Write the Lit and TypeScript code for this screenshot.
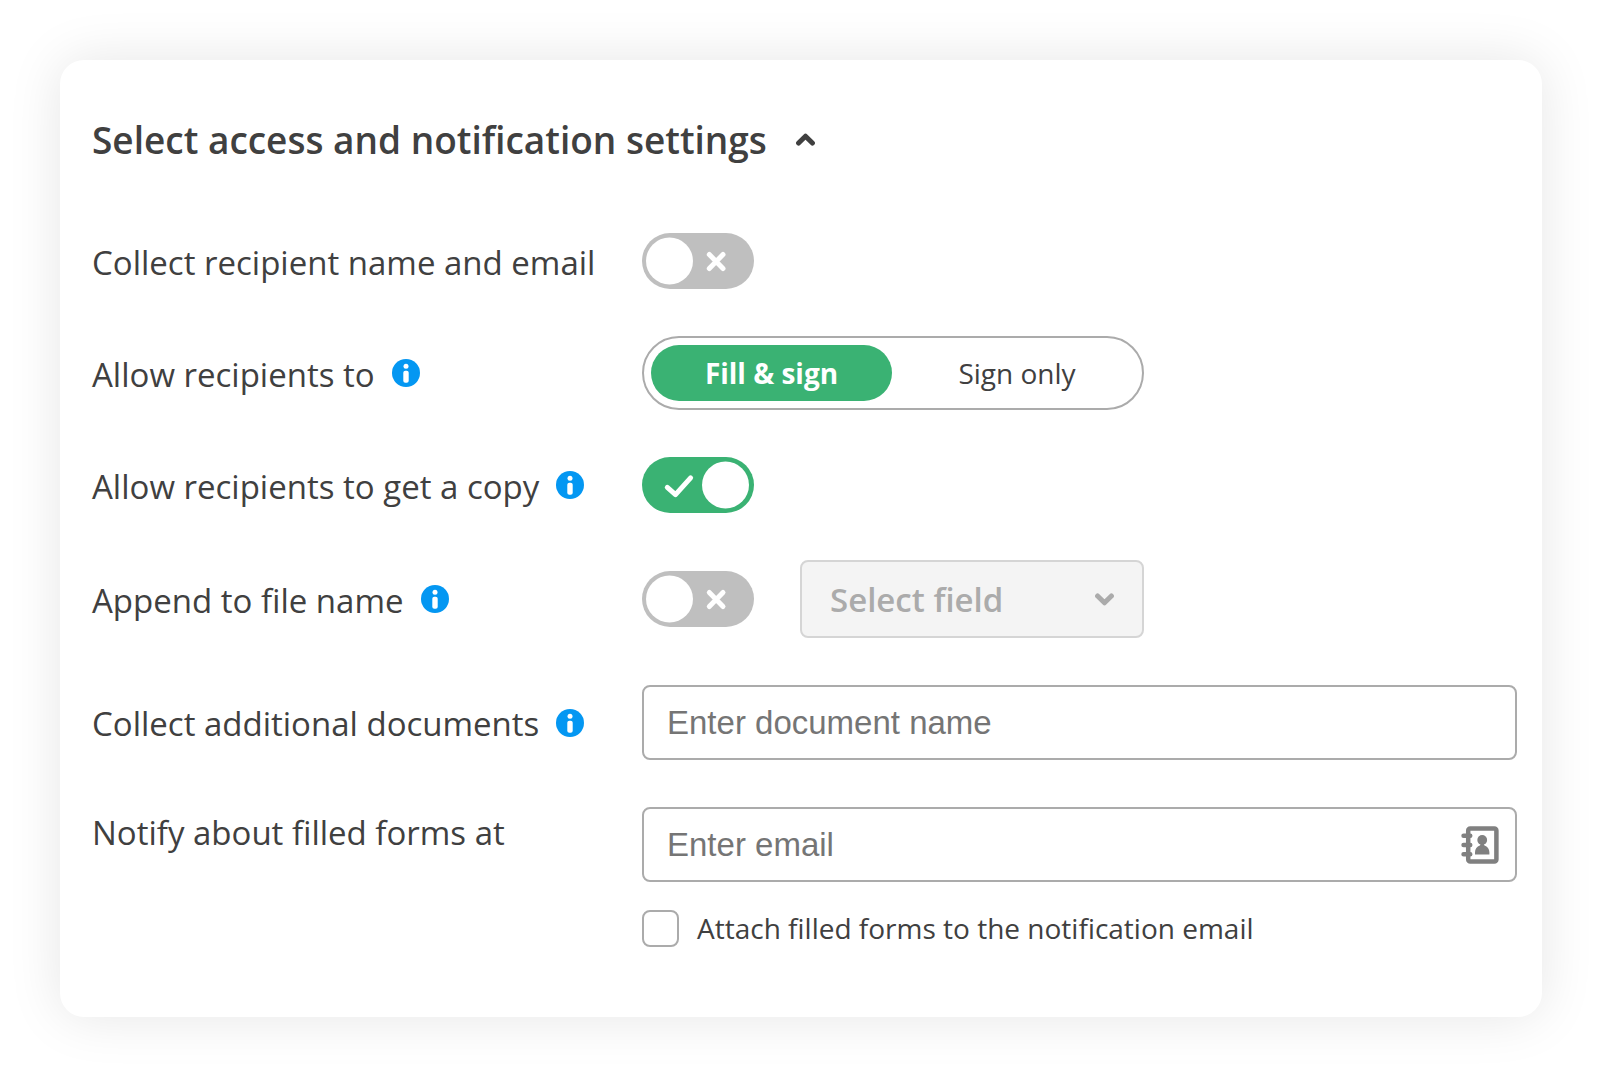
import { LitElement, html, css, svg, nothing } from "lit";
import { customElement, property, state } from "lit/decorators.js";

/** On/off switch: a native checkbox drawn as a pill with a knob and a glyph. */
@customElement("toggle-switch")
class ToggleSwitch extends LitElement {
  @property({ type: Boolean }) checked = false;
  @property() label = "";

  static styles = css`
    :host {
      display: inline-grid;
      flex: none;
    }
    .input,
    .face {
      grid-area: 1 / 1;
      width: 112px;
      height: 56px;
      margin: 0;
    }
    .input {
      appearance: none;
      border-radius: 28px;
      background: #bfbfbf;
      cursor: pointer;
    }
    .input:checked {
      background: #3ab273;
    }
    .face {
      pointer-events: none;
      fill: none;
      stroke: #fff;
      stroke-width: 5;
      stroke-linecap: round;
      stroke-linejoin: round;
    }
    .knob {
      fill: #fff;
      stroke: none;
    }
  `;

  render() {
    return html`
      <input
        class="input"
        type="checkbox"
        role="switch"
        aria-label=${this.label}
        .checked=${this.checked}
        @change=${(e: Event) => {
          this.checked = (e.target as HTMLInputElement).checked;
        }}
      />
      <svg class="face" viewBox="0 0 112 56" aria-hidden="true">
        ${this.checked
          ? svg`<path d="M25.3 30.3 33.5 37.6 48.6 20.8" />
              <circle class="knob" cx="83.5" cy="28" r="23.5" />`
          : svg`<path d="M67.3 21.5 81 35.5M81 21.5 67.3 35.5" />
              <circle class="knob" cx="27.5" cy="28" r="23.5" />`}
      </svg>
    `;
  }
}

/** Row caption with an optional information button. */
@customElement("setting-label")
class SettingLabel extends LitElement {
  @property() text = "";
  @property({ type: Boolean }) info = false;

  static styles = css`
    :host {
      display: flex;
      align-items: center;
      gap: 17px;
      font-size: 33px;
      line-height: 46px;
    }
    .text {
      padding-top: 3px;
    }
    .info {
      display: block;
      padding: 0;
      border: 0;
      background: none;
      cursor: pointer;
    }
    .icon {
      display: block;
      width: 28px;
      height: 28px;
      fill: #fff;
    }
    .disc {
      fill: #0497f2;
    }
  `;

  render() {
    return html`
      <span class="text">${this.text}</span>
      ${this.info
        ? html`<button class="info" type="button" aria-label="More information">
            <svg class="icon" viewBox="0 0 28 28" aria-hidden="true">
              <circle class="disc" cx="14" cy="14" r="14" />
              <circle cx="14" cy="7.2" r="2.5" />
              <rect x="11.3" y="11.8" width="5.4" height="12" rx="2" />
            </svg>
          </button>`
        : nothing}
    `;
  }
}

@customElement("app-root")
class AppRoot extends LitElement {
  @state() private open = true;
  @state() private mode = "fill";

  static styles = css`
    :host {
      display: block;
      padding: 60px;
      background: #fff;
      color: #404040;
      font-family: "Open Sans", "Noto Sans", sans-serif;
    }
    * {
      box-sizing: border-box;
    }
    .card {
      padding: 55px 25px 70px 32px;
      border-radius: 24px;
      background: #fff;
      box-shadow: 0 0 54px rgba(0, 0, 0, 0.1);
    }
    .title {
      margin: 0 0 69px;
      font-size: 37px;
      line-height: 49px;
      font-weight: 600;
    }
    .title-button {
      display: flex;
      align-items: center;
      gap: 29px;
      padding: 0;
      border: 0;
      background: none;
      color: inherit;
      font: inherit;
      cursor: pointer;
    }
    .chevron {
      width: 19px;
      height: 13px;
      fill: none;
      stroke: currentColor;
      stroke-width: 5;
      stroke-linecap: round;
      stroke-linejoin: round;
    }
    .rows {
      display: grid;
      grid-template-columns: 550px minmax(0, 1fr);
      row-gap: 47px;
      align-items: center;
    }
    .top {
      align-self: start;
    }
    .line {
      display: flex;
      align-items: center;
      gap: 46px;
    }
    .segments {
      display: grid;
      grid-template-columns: 241px 1fr;
      width: 502px;
      margin: 0;
      padding: 7px 0 7px 7px;
      border: 2px solid #ababab;
      border-radius: 37px;
      font-size: 28px;
      line-height: 56px;
      text-align: center;
    }
    .segment {
      display: grid;
      cursor: pointer;
    }
    .radio,
    .segment-text {
      grid-area: 1 / 1;
    }
    .radio {
      appearance: none;
      margin: 0;
      border-radius: 28px;
    }
    .radio:checked {
      background: #3ab273;
    }
    .segment-text {
      z-index: 1;
    }
    .radio:checked + .segment-text {
      color: #fff;
      font-weight: 700;
    }
    .select-box {
      display: grid;
      align-items: center;
      width: 344px;
      color: #ababab;
    }
    .select {
      grid-area: 1 / 1;
      appearance: none;
      width: 100%;
      height: 78px;
      padding: 0 64px 0 28px;
      border: 2px solid #d5d5d5;
      border-radius: 8px;
      background: #f4f4f4;
      color: inherit;
      opacity: 1;
      font-family: inherit;
      font-size: 33px;
      font-weight: 600;
    }
    .select-box .chevron {
      grid-area: 1 / 1;
      justify-self: end;
      margin-right: 30px;
      pointer-events: none;
    }
    .field {
      display: grid;
      align-items: center;
    }
    .input {
      grid-area: 1 / 1;
      width: 100%;
      height: 75px;
      padding: 0 64px 0 23px;
      border: 2px solid #ababab;
      border-radius: 8px;
      background: #fff;
      color: #404040;
      font-family: "Liberation Sans", Arial, sans-serif;
      font-size: 33px;
    }
    .input::placeholder {
      color: #757575;
      opacity: 1;
    }
    .contacts {
      grid-area: 1 / 1;
      justify-self: end;
      margin-right: 18px;
      padding: 0;
      border: 0;
      background: none;
      cursor: pointer;
    }
    .contacts-icon {
      display: block;
      width: 38px;
      height: 38px;
      fill: #808080;
    }
    .frame {
      fill: none;
      stroke: #808080;
      stroke-width: 4.5;
    }
    .rings {
      stroke: #808080;
      stroke-width: 4.6;
      stroke-linecap: round;
    }
    .attach {
      display: flex;
      align-items: center;
      gap: 18px;
      margin-top: 28px;
      font-size: 28px;
      line-height: 37px;
      cursor: pointer;
    }
    .check {
      appearance: none;
      width: 37px;
      height: 37px;
      margin: 0;
      border: 2px solid #ababab;
      border-radius: 8px;
      background: #fff;
    }
    .check:checked {
      border-color: #3ab273;
      background: #3ab273;
    }
  `;

  private segment(value: string, text: string) {
    return html`<label class="segment">
      <input
        class="radio"
        type="radio"
        name="mode"
        value=${value}
        .checked=${this.mode === value}
        @change=${() => {
          this.mode = value;
        }}
      />
      <span class="segment-text">${text}</span>
    </label>`;
  }

  private rows() {
    return html`<div class="rows">
      <setting-label text="Collect recipient name and email"></setting-label>
      <div class="line">
        <toggle-switch label="Collect recipient name and email"></toggle-switch>
      </div>

      <setting-label text="Allow recipients to" info></setting-label>
      <fieldset class="segments" aria-label="Allow recipients to">
        ${this.segment("fill", "Fill & sign")} ${this.segment("sign", "Sign only")}
      </fieldset>

      <setting-label text="Allow recipients to get a copy" info></setting-label>
      <div class="line">
        <toggle-switch label="Allow recipients to get a copy" checked></toggle-switch>
      </div>

      <setting-label text="Append to file name" info></setting-label>
      <div class="line">
        <toggle-switch label="Append to file name"></toggle-switch>
        <div class="select-box">
          <select class="select" aria-label="Field to append" disabled>
            <option>Select field</option>
          </select>
          <svg class="chevron" viewBox="0 0 19 13" aria-hidden="true">
            <path d="M2.6 3 9.5 9.8 16.4 3" />
          </svg>
        </div>
      </div>

      <setting-label text="Collect additional documents" info></setting-label>
      <div class="field">
        <input
          class="input"
          type="text"
          aria-label="Collect additional documents"
          placeholder="Enter document name"
        />
      </div>

      <setting-label class="top" text="Notify about filled forms at"></setting-label>
      <div>
        <div class="field">
          <input
            class="input"
            type="email"
            aria-label="Notify about filled forms at"
            placeholder="Enter email"
          />
          <button class="contacts" type="button" aria-label="Choose from contacts">
            <svg class="contacts-icon" viewBox="0 0 38 38" aria-hidden="true">
              <rect class="frame" x="7.2" y="2.6" width="28.2" height="32.8" rx="2" />
              <path class="rings" d="M2.6 9.7h6.6M2.6 19h6.6M2.6 28.3h6.6" />
              <circle cx="21.2" cy="14" r="4.9" />
              <path
                d="M14 28.6v-2.4c0-3.4 2-5.8 4.8-6.8.9-.5.9-1.4.5-2h3.8c-.4.6-.4 1.5.5 2 2.8 1 4.8 3.4 4.8 6.8v2.4z"
              />
            </svg>
          </button>
        </div>
        <label class="attach">
          <input class="check" type="checkbox" />
          <span>Attach filled forms to the notification email</span>
        </label>
      </div>
    </div>`;
  }

  render() {
    return html`<section class="card">
      <h2 class="title">
        <button
          class="title-button"
          type="button"
          aria-expanded=${this.open ? "true" : "false"}
          @click=${() => {
            this.open = !this.open;
          }}
        >
          <span>Select access and notification settings</span>
          <svg class="chevron" viewBox="0 0 19 13" aria-hidden="true">
            <path d=${this.open ? "M2.6 10 9.5 3.2 16.4 10" : "M2.6 3 9.5 9.8 16.4 3"} />
          </svg>
        </button>
      </h2>
      ${this.open ? this.rows() : nothing}
    </section>`;
  }
}
